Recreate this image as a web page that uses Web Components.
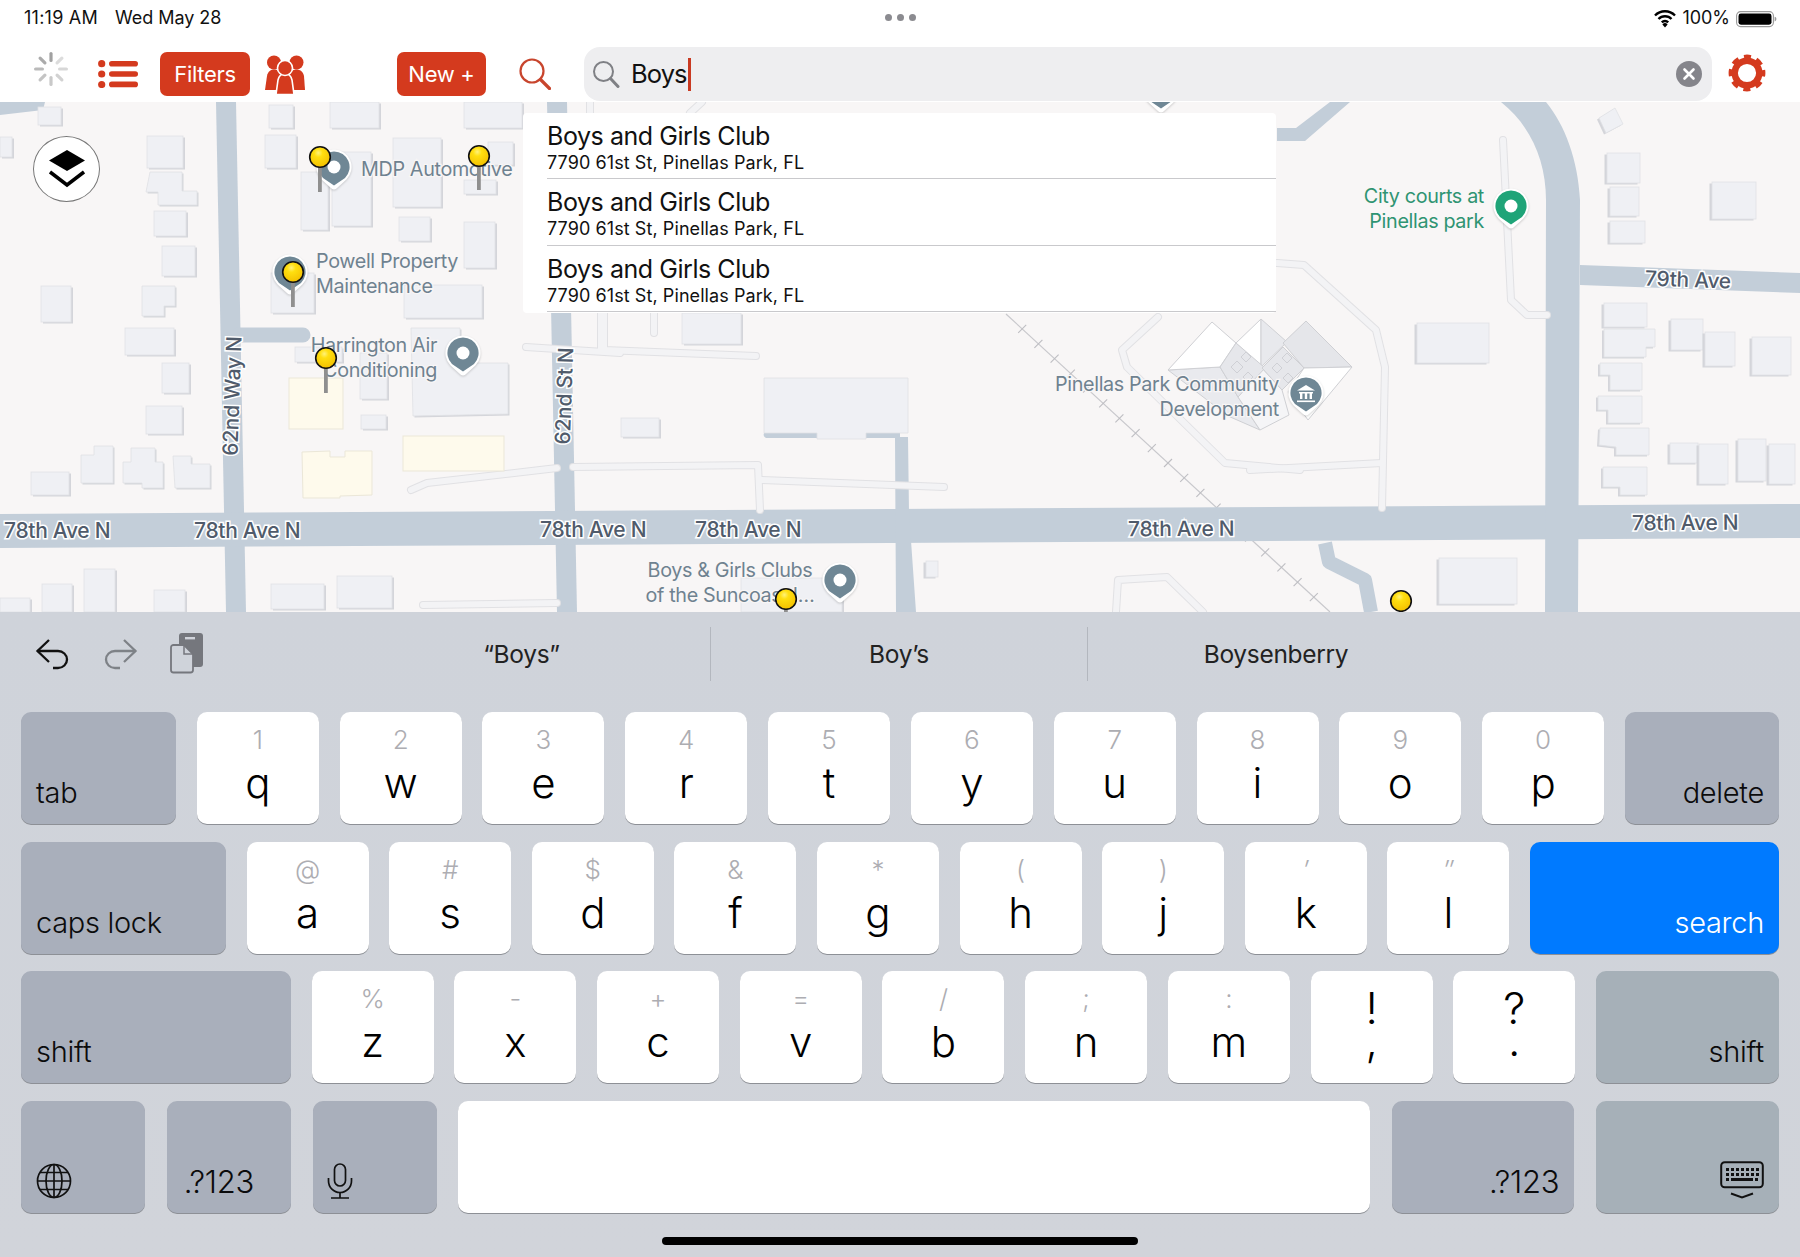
<!DOCTYPE html>
<html lang="en"><head><meta charset="utf-8"><title>Map search</title>
<style>
html,body{margin:0;padding:0;background:#fff}
body{width:1800px;height:1257px;overflow:hidden;font-family:Inter,"Liberation Sans",sans-serif}
</style></head>
<body>
<app-screen></app-screen>
<script>
const RED='#d43a1e';
function def(name,css,html,extra){
  customElements.define(name,class extends HTMLElement{
    constructor(){super();const s=this.attachShadow({mode:'open'});
      const h=typeof html==='function'?html(this):html;
      s.innerHTML='<style>'+css+'</style>'+h;}
    connectedCallback(){if(extra)extra(this);}
  });
}
/* ---------- status bar ---------- */
def('status-bar',`
:host{display:grid;grid-template-columns:1fr auto 1fr;height:46px;box-sizing:border-box;padding:8px 23px 0 24px;font:400 18px/20px Inter,sans-serif;color:#111;letter-spacing:-.05px}
.l{display:flex;gap:17px}.l span:first-child{letter-spacing:.25px}.r{display:flex;justify-content:flex-end;gap:6px;align-items:flex-start}
.dots{display:flex;gap:5px;padding-top:6px}.dots i{width:7px;height:7px;border-radius:50%;background:#8b8b90}
svg{display:block}`,`
<div class="l"><span>11:19 AM</span><span>Wed May 28</span></div>
<div class="dots"><i></i><i></i><i></i></div>
<div class="r">
<svg width="22" height="20" viewBox="0 0 22 20"><path d="M1 7.5a14 14 0 0 1 20 0M4.5 11a9 9 0 0 1 13 0M7.8 14.3a4.5 4.5 0 0 1 6.4 0" fill="none" stroke="#000" stroke-width="2.4"/><path d="M11 19.5 8.4 16.4a3.6 3.6 0 0 1 5.2 0Z"/></svg>
<span>100%</span>
<svg width="41" height="20" viewBox="0 0 41 20"><rect x=".6" y="3.6" width="36.8" height="15" rx="4" fill="none" stroke="#9a9a9a" stroke-width="1.1"/><rect x="2.5" y="5.5" width="33" height="11.2" rx="2.4" fill="#000"/><path d="M38.6 8.8c1.2.3 1.8 1.2 1.8 2.3s-.6 2-1.8 2.3Z" fill="#9a9a9a"/></svg>
</div>`);
/* ---------- toolbar ---------- */
def('red-button',`
:host{display:flex;align-items:center;justify-content:center;height:44px;border-radius:7px;background:${RED};color:#fff;font:400 22px/1 Inter,sans-serif;letter-spacing:-.3px;box-sizing:border-box}`,`<slot></slot>`);
def('search-field',`
:host{display:flex;align-items:center;flex:1;height:54px;border-radius:16px;background:#eeeef0;box-sizing:border-box;padding:0 10px 0 8px;font:400 25.5px/1 Inter,sans-serif;color:#111}
.t{margin-left:11px;letter-spacing:-.9px;margin-right:1px}
.c{width:3px;height:33px;background:#c93a22}
.sp{flex:1}
svg{display:block;flex:none}`,`
<svg width="28" height="28" viewBox="0 0 28 28"><circle cx="11.5" cy="11.5" r="9.5" fill="none" stroke="#7f8085" stroke-width="2"/><path d="M18.5 18.5 26 26.5" stroke="#7f8085" stroke-width="3" stroke-linecap="round"/></svg>
<span class="t">Boys</span><span class="c"></span><span class="sp"></span>
<svg width="26" height="26" viewBox="0 0 26 26"><circle cx="13" cy="13" r="13" fill="#85858b"/><path d="M8.5 8.5l9 9M17.5 8.5l-9 9" stroke="#fff" stroke-width="2.6" stroke-linecap="round"/></svg>`);
const spinner=(()=>{let s='';for(let i=0;i<8;i++){const o=[.95,.35,.4,.45,.55,.6,.7,.85][i];s+=`<rect x="16.4" y="1" width="3.2" height="10" rx="1.6" fill="#9c9c9c" opacity="${o}" transform="rotate(${i*45} 18 18)"/>`;}return s;})();
def('app-toolbar',`
:host{display:flex;align-items:center;height:56px;background:#fff;position:relative;z-index:2}
svg{display:block;flex:none}
red-button.f{width:90px;margin-left:22px}
red-button.n{width:89px;margin-left:92px}
.spin{margin:-10px 0 0 33px}.list{margin-left:29px}.ppl{margin:1px 0 0 15px}.mag{margin:-1px 0 0 33px}
search-field{margin-left:33px}.gear{margin:-2px 34px 0 16px}`,`
<svg class="spin" width="36" height="36" viewBox="0 0 36 36">${spinner}</svg>
<svg class="list" width="40" height="28" viewBox="0 0 40 28" fill="${RED}"><circle cx="3.7" cy="3.7" r="3.6"/><circle cx="3.7" cy="14" r="3.6"/><circle cx="3.7" cy="24.5" r="3.6"/><rect x="11" y="1" width="29" height="5.6" rx="2.8"/><rect x="11" y="11.2" width="29" height="5.6" rx="2.8"/><rect x="11" y="21.6" width="29" height="5.6" rx="2.8"/></svg>
<red-button class="f">Filters</red-button>
<svg class="ppl" width="40" height="39" viewBox="0 0 40 39" fill="${RED}"><circle cx="9" cy="7.5" r="7"/><circle cx="31.5" cy="7.5" r="7"/><path d="M0 35 2 21C3 16 6 14.5 9 14.5s6 1.5 7 6.5L18 35Z"/><path d="M22 35 24 21c1-4.5 4-6.5 7.5-6.5S38 16.5 39 21l1 14Z"/><path d="M11 39.5 13 25C14 21 16.5 18.5 20 18.5S26 21 27 25l2 14.5Z" stroke="#fff" stroke-width="1.6"/><circle cx="20" cy="13" r="7.5" stroke="#fff" stroke-width="1.6"/></svg>
<red-button class="n">New +</red-button>
<svg class="mag" width="32" height="32" viewBox="0 0 32 32"><circle cx="13" cy="13" r="11.5" fill="none" stroke="#c8452d" stroke-width="2.2"/><path d="M21.5 21.5 30.5 30.5" stroke="#c8452d" stroke-width="3.2" stroke-linecap="round"/></svg>
<search-field></search-field>
<svg class="gear" width="38" height="38" viewBox="0 0 38 38"><circle cx="19" cy="19" r="12.3" fill="none" stroke="${RED}" stroke-width="6.4"/><circle cx="19" cy="19" r="16.2" fill="none" stroke="${RED}" stroke-width="4.4" stroke-dasharray="7 5.72" stroke-dashoffset="3.5"/></svg>`);
/* ---------- map furniture ---------- */
function place(el,w,h){
  const x=+el.getAttribute('x'),y=+el.getAttribute('y');
  el.style.left=(x-w)+'px';el.style.top=(y-h-102)+'px';
}
def('map-label',`
:host{position:absolute;white-space:nowrap;font:400 19.75px/25px Inter,sans-serif;color:#6f8290;paint-order:stroke fill;-webkit-text-stroke:2.5px #f8f6f6;letter-spacing:-.35px}
:host([kind=road]){font:500 21px/25px Inter,sans-serif;color:#505b6b;-webkit-text-stroke:3px #fff;letter-spacing:-.3px}
:host([kind=green]){color:#2f9472}`,`<slot></slot>`,el=>{
  const a=el.getAttribute('anchor')||'start',x=+el.getAttribute('x'),y=+el.getAttribute('y'),r=el.getAttribute('rot')||0;
  el.style.left=x+'px';el.style.top=(y-102-12.5)+'px';
  const tx={start:'0',end:'-100%',middle:'-50%'}[a];
  el.style.textAlign={start:'left',end:'right',middle:'center'}[a];
  el.style.transform=`translateX(${tx}) rotate(${r}deg)`;
});
def('vert-label',`
:host{position:absolute;white-space:nowrap;font:500 21px/25px Inter,sans-serif;color:#505b6b;paint-order:stroke fill;-webkit-text-stroke:3px #fff;letter-spacing:-.3px;transform:translate(-50%,-50%) rotate(-88deg)}`,`<slot></slot>`,el=>{
  el.style.left=el.getAttribute('x')+'px';el.style.top=(el.getAttribute('y')-102)+'px';
});
def('poi-pin',`
:host{position:absolute;width:40px;height:46px;display:block}
svg{display:block;filter:drop-shadow(0 1px 1px rgba(0,0,0,.18))}`,el=>{
  const c=el.getAttribute('color')||'#6f8795';
  const inner=el.hasAttribute('civic')?
   `<path d="M11 17.5 20 12l9 5.5Z M13 19h14v1.500H13Z" fill="#fff"/><rect x="14" y="20" width="2.4" height="6" fill="#fff"/><rect x="18.8" y="20" width="2.4" height="6" fill="#fff"/><rect x="23.6" y="20" width="2.4" height="6" fill="#fff"/><rect x="11" y="27.5" width="18" height="1.6" fill="#fff"/>`
   :`<circle cx="20" cy="20" r="6.5" fill="#fff"/>`;
  return `<svg width="40" height="46" viewBox="0 0 40 46"><path d="M20 2.5A17.5 17.5 0 0 1 32.4 32.4L22.5 41.5Q20 43.5 17.5 41.5L7.6 32.4A17.5 17.5 0 0 1 20 2.5Z" fill="#fff"/><path d="M20 4.5A15.5 15.5 0 0 1 31 31L20 38.5 9 31A15.5 15.5 0 0 1 20 4.5Z" fill="${c}"/>${inner}</svg>`;
},el=>place(el,20,20));
def('drop-pin',`
:host{position:absolute;display:block}
svg{display:block}`,el=>{
  const st=+(el.getAttribute('stem')||35);
  const id='g'+Math.random().toString(36).slice(2,7);
  return `<svg width="26" height="${st+14}" viewBox="0 0 26 ${st+14}"><rect x="11" y="13" width="3.8" height="${st}" fill="#8f8f8f"/><defs><radialGradient id="${id}" cx=".42" cy=".3" r=".7"><stop offset="0" stop-color="#fff27a"/><stop offset=".3" stop-color="#ffdf10"/><stop offset="1" stop-color="#f3c000"/></radialGradient></defs><circle cx="13" cy="13" r="10.3" fill="url(#${id})" stroke="#111" stroke-width="1.6"/></svg>`;
},el=>place(el,13,13));
def('layers-button',`
:host{position:absolute;left:33px;top:34px;width:67px;height:66px;border-radius:50%;background:#fff;box-sizing:border-box;border:1px solid #777;display:flex;align-items:center;justify-content:center}
svg{display:block}`,`<svg width="36" height="38" viewBox="0 0 36 38"><path d="M18 0 36 10.5 18 21 0 10.5Z" fill="#000"/><path d="M1 22 18 35 35 22" fill="none" stroke="#000" stroke-width="3.6"/></svg>`);
def('result-row',`
:host{display:block;height:66.3px;box-sizing:border-box;margin-left:24px;padding-top:8px;border-bottom:1px solid #c9c9cc;color:#111}
.t{font:400 25px/30px Inter,sans-serif;letter-spacing:-.45px}
.s{font:400 18px/22px Inter,sans-serif;letter-spacing:.08px;margin-top:1px}`,el=>`<div class="t">${el.getAttribute('title')}</div><div class="s">${el.getAttribute('sub')}</div>`);
def('result-list',`
:host{position:absolute;left:523px;top:11px;width:753px;height:200px;background:#fff;border-radius:4px;display:block;z-index:3}`,`<slot></slot>`);
/* ---------- map ---------- */
const B=[[38,107,23,18],[0,137,12,20],[147,136,36,32],[154,211,32,25],[162,246,33,30],[41,286,30,36],[269,105,24,23],[265,135,31,33],[330,102,49,26],[464,102,58,26],[301,172,27,58],[332,152,39,74],[393,138,48,69],[399,217,31,24],[464,222,31,46],[488,142,25,23],[464,180,32,14],[271,273,43,40],[404,285,78,33],[125,328,49,27],[162,363,27,30],[146,406,36,28],[31,472,38,23],[295,347,47,15],[360,353,27,46],[361,415,25,14],[0,598,30,14],[42,584,30,28],[84,569,31,43],[154,590,31,22],[271,584,53,25],[337,576,55,32],[682,313,59,31],[621,418,38,19],[926,561,12,16],[741,578,101,34],[1417,323,72,40],[1604,303,43,24],[1671,319,32,31],[1705,332,30,34],[1752,337,39,38],[1670,443,28,20],[1699,444,29,40],[1738,439,28,42],[1769,444,26,40],[1439,558,78,46],[1607,153,33,30],[1610,187,29,29],[1610,221,35,22],[1712,182,44,37]];
const P=['150,172 182,172 182,191 197,191 197,205 158,205 158,192 146,192','142,286 175,286 175,306 164,306 164,316 142,316','81,455 94,455 94,446 113,446 113,483 81,483','123,462 131,462 131,448 155,448 155,462 163,462 163,488 142,488 142,483 123,483','173,456 191,456 191,464 210,464 210,488 175,488','411,328 460,328 460,363 508,363 508,414 413,416','1604,329 1655,329 1655,347 1646,347 1646,357 1604,357','1600,363 1642,363 1642,390 1610,390 1610,375 1600,375','1598,396 1642,396 1642,423 1608,423 1608,410 1598,410','1600,428 1649,428 1649,455 1616,455 1616,447 1599,445','1603,467 1647,467 1647,495 1620,495 1620,487 1603,487','1599,118 1615,108 1623,124 1606,133'];
const Y=[[289,378,54,51],[403,436,101,35]];
const YP='302,452 330,451 330,457 345,457 345,451 372,451 372,495 340,496 340,498 303,498';
const ROAD='#c3ced9';
function bldg(){
  let s='';
  for(const [x,y,w,h] of B){const dx=x>900?-2.5:2;s+=`<rect x="${x+dx}" y="${y+1.5}" width="${w}" height="${h}" fill="#d4d5da"/><rect x="${x}" y="${y}" width="${w}" height="${h}" fill="#eff0f4" stroke="#e0e1e5" stroke-width=".8"/>`;}
  for(const p of P){const dx=+p.split(',')[0]>900?-2:1.5;s+=`<polygon points="${p}" transform="translate(${dx} 1.5)" fill="#d4d5da"/><polygon points="${p}" fill="#eff0f4" stroke="#e0e1e5" stroke-width=".8"/>`;}
  s+=`<polygon points="764,378 908,378 908,433 866,433 866,439 817,439 817,433 764,433" fill="#eff0f4" stroke="#e0e1e5" stroke-width=".8"/>`;
  for(const [x,y,w,h] of Y)s+=`<rect x="${x}" y="${y}" width="${w}" height="${h}" fill="#fefaec" stroke="#ebe7d8"/>`;
  s+=`<polygon points="${YP}" fill="#fefaec" stroke="#ebe7d8"/>`;
  return s;
}
function paths(){
  const L=['1503,140 1511,300 1527,315 1547,315','1277,263 1304,265 1376,330 1385,367 1382,508','1250,470 1382,463','1158,317 1122,350 1127,367 1225,463 1300,470','411,490 427,483 557,468','573,467 758,465 760,510','761,480 944,487','604,313 604,350 756,356','654,313 654,333','526,347 620,353','601,313 601,350','423,605 557,603','1116,612 1118,580 1167,577 1203,612','702,102 690,113','590,102 590,113'];
  let a='',b='';
  for(const l of L){a+=`<polyline points="${l}" fill="none" stroke="#e1e1e4" stroke-width="8" stroke-linecap="round" stroke-linejoin="round"/>`;b+=`<polyline points="${l}" fill="none" stroke="#f3f3f5" stroke-width="6" stroke-linecap="round" stroke-linejoin="round"/>`;}
  return a+b;
}
function rail(){
  const x0=1006,y0=314,x1=1330,y1=612,n=20;
  let s=`<line x1="${x0}" y1="${y0}" x2="${x1}" y2="${y1}" stroke="#c8c8cc" stroke-width="1.2"/>`;
  for(let i=1;i<n;i++){const x=x0+(x1-x0)*i/n,y=y0+(y1-y0)*i/n;s+=`<line x1="${x-4}" y1="${y+4}" x2="${x+4}" y2="${y-4}" stroke="#bdbdc2" stroke-width="1.1"/>`;}
  return s;
}
const COMM=`<g stroke="#cfd0d4" stroke-width="1">
<polygon points="1168,370 1220,367 1238,397 1260,430 1228,416" fill="#e9eaee"/>
<polygon points="1212,322 1168,370 1220,367 1236,343" fill="#fff"/>
<polygon points="1261,319 1236,343 1261,367" fill="#fff"/>
<polygon points="1261,319 1287,342 1261,367" fill="#e8e9ed"/>
<polygon points="1306,321 1352,367 1304,368 1283,343" fill="#e5e6ea"/>
<polygon points="1352,367 1304,368 1288,392 1308,420" fill="#fff"/>
<polygon points="1238,397 1262,368 1282,390 1289,415 1260,430" fill="#f5f5f7"/>
<polygon points="1220,367 1236,343 1265,368 1238,397" fill="#e6e7eb"/>
<polygon points="1262,368 1283,347 1304,368 1282,390" fill="#e6e7eb"/>
</g><g fill="none" stroke="#cfd0d5" stroke-width="1"><path d="M1231 367l6-6 6 6-6 6ZM1241 357l5-5 5 5-5 5ZM1243 377l5-5 5 5-5 5ZM1272 368l5-5 5 5-5 5ZM1282 358l5-5 5 5-5 5ZM1283 378l5-5 5 5-5 5Z"/></g>`;
def('map-canvas',`
:host{display:block;position:relative;height:510px;overflow:hidden;background:#f8f6f6}
svg{display:block;position:absolute;left:0;top:0}`,()=>`
<svg width="1800" height="510" viewBox="0 102 1800 510">
${rail()}
<g fill="${ROAD}">
<polygon points="216,102 236,102 246,612 226,612"/>
<polygon points="547,102 567,102 577,612 557,612"/>
<polygon points="0,514 1800,504 1800,538 0,548"/>
<path d="M1501 102C1530 125 1546 160 1546 200L1545 612H1578L1580 200C1578 160 1565 125 1546 102Z"/>
<polygon points="1580,265 1800,273 1800,293 1580,285"/>
<polygon points="1277,128 1296,128 1330,102 1350,102 1305,141 1277,141"/>
<polygon points="0,102 45,102 43,110 0,115"/>
<polygon points="895,437 908,437 909,512 916,612 896,612"/>
<path d="M764 433H900V438H766A4 4 0 0 1 764 433Z"/>
</g>
<path d="M239 335H303" stroke="${ROAD}" stroke-width="15" stroke-linecap="round"/>
<polyline points="1325,543 1329,562 1365,580 1371,612" fill="none" stroke="${ROAD}" stroke-width="14" stroke-linejoin="round"/>
${paths()}${bldg()}${COMM}
</svg>
<poi-pin x="334" y="167"></poi-pin>
<poi-pin x="290" y="272"></poi-pin>
<poi-pin x="463" y="353"></poi-pin>
<poi-pin x="840" y="580"></poi-pin>
<poi-pin x="1306" y="393" civic></poi-pin>
<poi-pin x="1511" y="206" color="#1fa478"></poi-pin>
<poi-pin x="1161" y="90"></poi-pin>
<map-label x="361" y="169">MDP Automotive</map-label>
<map-label x="316" y="261">Powell Property<br>Maintenance</map-label>
<map-label x="437" y="345" anchor="end">Harrington Air<br>Conditioning</map-label>
<map-label x="1279" y="384" anchor="end">Pinellas Park Community<br>Development</map-label>
<map-label x="730" y="570" anchor="middle">Boys &amp; Girls Clubs<br>of the Suncoast I…</map-label>
<map-label x="1484" y="196" anchor="end" kind="green">City courts at<br>Pinellas park</map-label>
<map-label x="4" y="530" kind="road">78th Ave N</map-label>
<map-label x="194" y="530" kind="road">78th Ave N</map-label>
<map-label x="540" y="529" kind="road">78th Ave N</map-label>
<map-label x="695" y="529" kind="road">78th Ave N</map-label>
<map-label x="1128" y="528" kind="road" rot="-.3">78th Ave N</map-label>
<map-label x="1632" y="522" kind="road" rot="-.3">78th Ave N</map-label>
<map-label x="1645" y="279" kind="road" rot="2">79th Ave</map-label>
<vert-label x="232" y="396">62nd Way N</vert-label>
<vert-label x="564" y="396">62nd St N</vert-label>
<drop-pin x="319.5" y="157" stem="35"></drop-pin>
<drop-pin x="479" y="156" stem="34"></drop-pin>
<drop-pin x="292.5" y="272" stem="35"></drop-pin>
<drop-pin x="326" y="358" stem="35"></drop-pin>
<drop-pin x="786" y="599" stem="35"></drop-pin>
<drop-pin x="1401" y="601" stem="35"></drop-pin>
<layers-button></layers-button>
<result-list>
<result-row title="Boys and Girls Club" sub="7790 61st St, Pinellas Park, FL"></result-row>
<result-row title="Boys and Girls Club" sub="7790 61st St, Pinellas Park, FL"></result-row>
<result-row title="Boys and Girls Club" sub="7790 61st St, Pinellas Park, FL"></result-row>
</result-list>`);
/* ---------- keyboard ---------- */
def('kb-key',`
:host{display:flex;flex-direction:column;align-items:center;flex:none;height:112px;box-sizing:border-box;width:122px;padding-top:15px;background:#fff;border-radius:10px;box-shadow:0 1px 0 #8d9096;font:300 42px/42px Inter,sans-serif;color:#000}
.h{font:300 26px/26px Inter,sans-serif;color:#adadb2;height:26px;margin-bottom:9px}
:host([kind]){background:#a9afbb;padding:0 15px 16px 15px;justify-content:flex-end;align-items:flex-start;font:300 29px/30px Inter,sans-serif;letter-spacing:-.3px;color:#0b0b0c}
:host([kind=r]){align-items:flex-end}
:host([kind=go]){background:#007aff;color:#fff;align-items:flex-end}
:host([kind=sp]){background:#fff;padding:0}
:host([kind=sym]){background:#fff;padding:21px 0 0;align-items:center;justify-content:flex-start;font:300 44px/32px Inter,sans-serif;color:#000;white-space:pre-line;text-align:center}
:host([kind=ic]){padding:0 15px 14px}
:host([kind=icr]){padding:0 15px 14px;align-items:flex-end}`,el=>{
  const h=el.getAttribute('hint');
  return (h?`<div class="h">${h}</div>`:'')+'<slot></slot>';
});
const row=(s,hs)=>s.split('').map((c,i)=>`<kb-key hint="${hs[i].replace(/"/g,'&quot;')}">${c}</kb-key>`).join('');
def('kb-row',`:host{display:flex;justify-content:space-between;padding:0 21px}`,`<slot></slot>`);
def('kb-tool',`:host{display:block;flex:none}svg{display:block}`,el=>({
 undo:`<svg width="36" height="36" viewBox="0 0 36 36" fill="none" stroke="#111" stroke-width="2.3"><path d="M14 4 2.5 15 14 26"/><path d="M2.5 15H23a9 8.5 0 0 1 0 17h-5"/></svg>`,
 redo:`<svg width="36" height="36" viewBox="0 0 36 36" fill="none" stroke="#7e8287" stroke-width="2.3"><path d="M21 4 32.5 15 21 26"/><path d="M32.5 15H12a9 8.5 0 0 0 0 17h5"/></svg>`,
 paste:`<svg width="36" height="42" viewBox="0 0 36 42"><rect x="9" y="0" width="24" height="34" rx="3" fill="#75777d"/><rect x="15" y="4" width="10" height="2.4" fill="#d0d3da"/><path d="M3.5 12H14l9 9v16a2.5 2.5 0 0 1-2.5 2.5h-17A2.5 2.5 0 0 1 1 37V14.5A2.5 2.5 0 0 1 3.5 12Z" fill="#cfd3da" stroke="#75777d" stroke-width="1.8"/><path d="M14 12v9h9" fill="none" stroke="#75777d" stroke-width="1.5"/></svg>`
}[el.getAttribute('name')]));
def('kb-suggestions',`
:host{display:flex;height:100px;align-items:flex-start;font:400 24.5px/1 Inter,sans-serif;color:#222;letter-spacing:-.3px}
.tools{width:333px;display:flex;box-sizing:border-box;padding-left:35px;align-items:flex-start;height:100%}
kb-tool:nth-child(1){margin-top:24px}kb-tool:nth-child(2){margin:24px 0 0 32px}kb-tool:nth-child(3){margin:21px 0 0 31px}
.c{width:377px;height:54px;margin-top:15px;display:flex;align-items:center;justify-content:center;box-sizing:border-box}
.c+.c{border-left:1px solid #b3b7be}`,`
<div class="tools"><kb-tool name="undo"></kb-tool><kb-tool name="redo"></kb-tool><kb-tool name="paste"></kb-tool></div>
<div class="c">“Boys”</div><div class="c">Boy’s</div><div class="c">Boysenberry</div>`);
const globe=`<svg width="36" height="36" viewBox="0 0 36 36" fill="none" stroke="#111" stroke-width="1.7" style="display:block"><circle cx="18" cy="18" r="16.5"/><ellipse cx="18" cy="18" rx="8" ry="16.5"/><path d="M18 1.5v33M1.5 18h33M4 9.5h28M4 26.5h28"/></svg>`;
const mic=`<svg width="26" height="36" viewBox="0 0 26 36" fill="none" stroke="#111" stroke-width="1.7" style="display:block"><rect x="7.5" y="1" width="11" height="22" rx="5.5"/><path d="M1.5 15v3a11.5 11.5 0 0 0 23 0v-3M13 29.5V35M4 35h18"/></svg>`;
const kbic=(()=>{let d='';for(let r=0;r<2;r++)for(let i=0;i<7;i++)d+=`<rect x="${6+i*5}" y="${7+r*5}" width="3" height="3"/>`;
 return `<svg width="44" height="38" viewBox="0 0 44 38" style="display:block"><rect x="1.2" y="1.2" width="41.6" height="25" rx="3.5" fill="none" stroke="#111" stroke-width="2"/><g fill="#111">${d}<rect x="6" y="17" width="3" height="3"/><rect x="11" y="17" width="22" height="3"/><rect x="35" y="17" width="3" height="3"/></g><path d="M11 32.5 22 36.5 33 32.5" fill="none" stroke="#111" stroke-width="2"/></svg>`;})();
def('ios-keyboard',`
:host{display:block;height:645px;background:linear-gradient(#cfd3da,#d1d4da);position:relative}
.rows{display:flex;flex-direction:column;gap:17.67px}
.home{width:476px;height:8px;border-radius:4px;background:#000;margin:24px auto 0}`,`
<kb-suggestions></kb-suggestions>
<div class="rows">
<kb-row><kb-key kind="l" style="width:155px">tab</kb-key>${row('qwertyuiop','1234567890'.split(''))}<kb-key kind="r" style="width:154px">delete</kb-key></kb-row>
<kb-row><kb-key kind="l" style="width:205px">caps lock</kb-key>${row('asdfghjkl',['@','#','$','&amp;','*','(',')','<i>′</i>','<i>″</i>'])}<kb-key kind="go" style="width:249px">search</kb-key></kb-row>
<kb-row><kb-key kind="l" style="width:270px">shift</kb-key>${row('zxcvbnm',['%','-','+','=','/',';',':'])}<kb-key kind="sym">!
,</kb-key><kb-key kind="sym">?
.</kb-key><kb-key kind="r" style="width:183px;background:#a6b0b8">shift</kb-key></kb-row>
<kb-row><kb-key kind="ic" style="width:124px">${globe}</kb-key><kb-key kind="l" style="width:124px;padding-left:17px;font-size:31px">.?123</kb-key><kb-key kind="ic" style="width:124px;padding-left:14px">${mic}</kb-key><kb-key kind="sp" style="width:912px"></kb-key><kb-key kind="r" style="width:182px;font-size:31px">.?123</kb-key><kb-key kind="icr" style="width:183px;background:#a6b0b8">${kbic}</kb-key></kb-row>
</div>
<div class="home"></div>`);
def('app-screen',`:host{display:block;width:1800px;height:1257px;overflow:hidden;background:#fff}`,`
<status-bar></status-bar><app-toolbar></app-toolbar><map-canvas></map-canvas><ios-keyboard></ios-keyboard>`);
</script>
</body></html>
